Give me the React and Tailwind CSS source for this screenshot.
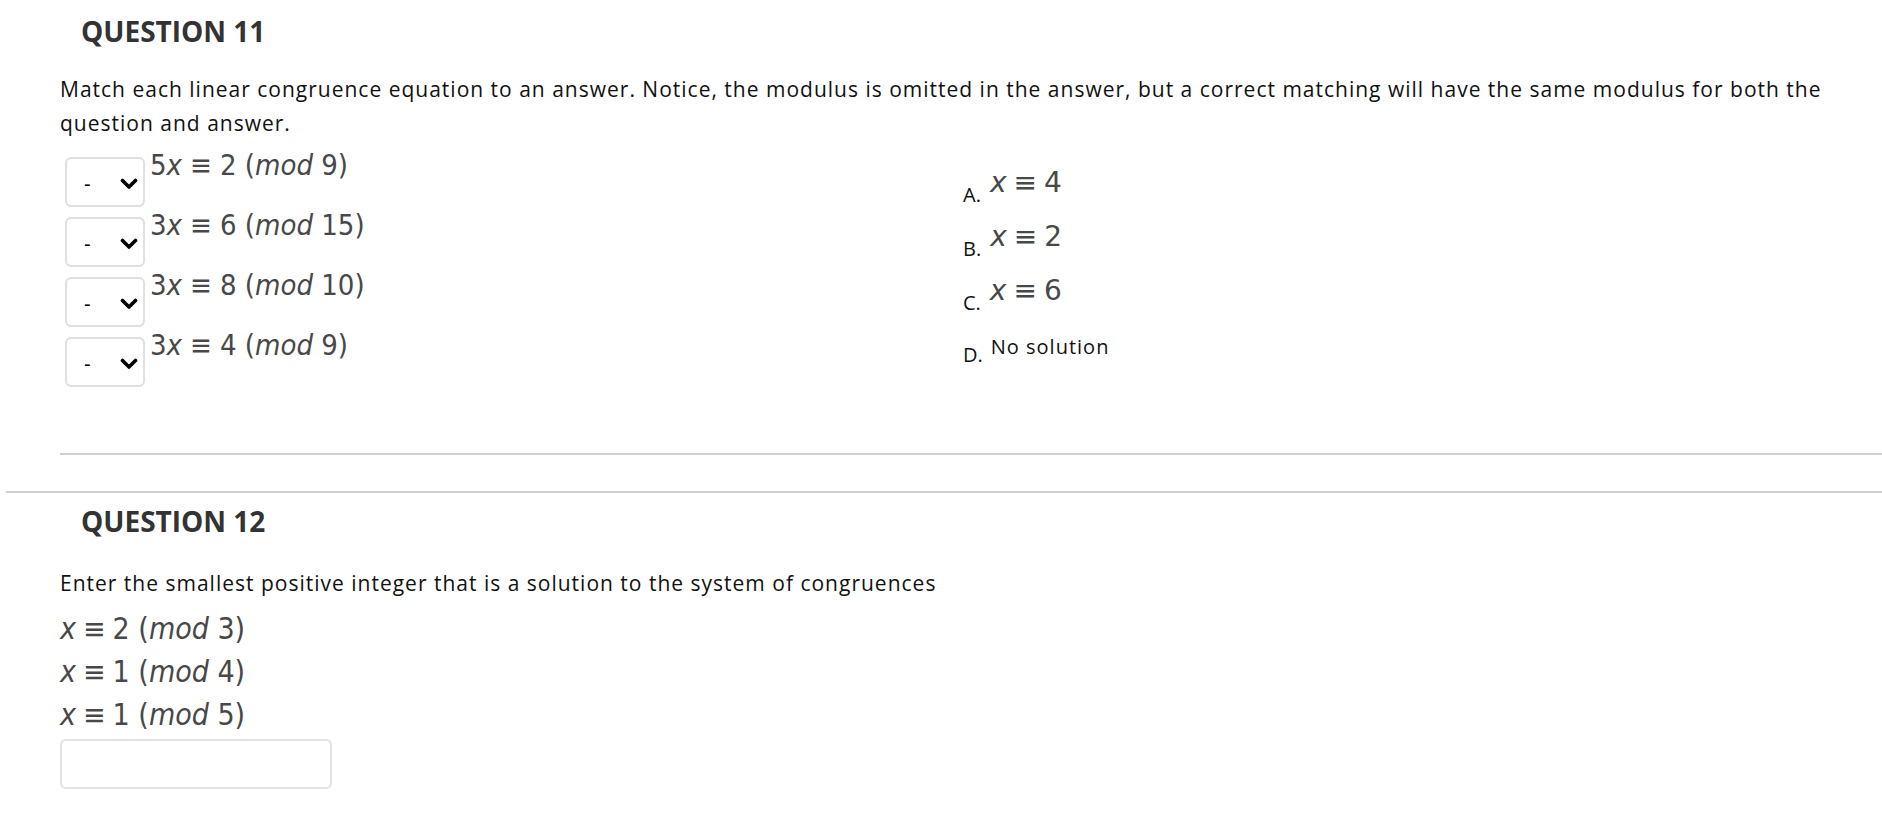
const MATCH_ROWS = [
  { coef: '5', rhs: '2', mod: '9' },
  { coef: '3', rhs: '6', mod: '15' },
  { coef: '3', rhs: '8', mod: '10' },
  { coef: '3', rhs: '4', mod: '9' },
];

const ANSWERS = [
  { letter: 'A.', rhs: '4' },
  { letter: 'B.', rhs: '2' },
  { letter: 'C.', rhs: '6' },
];

const SYSTEM = [
  { rhs: '2', mod: '3' },
  { rhs: '1', mod: '4' },
  { rhs: '1', mod: '5' },
];

function Congruence({ coef, rhs, mod, relGap = 'mx-[7px]' }) {
  return (
    <span className="text-[#484848] whitespace-nowrap">
      {coef}
      <i>x</i>
      <span className={relGap}>≡</span>
      {rhs} (<i>mod</i> {mod})
    </span>
  );
}

function Dropdown() {
  return (
    <div className="relative w-[80px] h-[50px] shrink-0 rounded-[6px] border-2 border-[#e0e0e0] bg-white">
      <select className="w-full h-full appearance-none bg-transparent pl-[17px] pt-[4px] text-[20px] text-black font-['Liberation_Sans',sans-serif] outline-none">
        <option>-</option>
        <option>A</option>
        <option>B</option>
        <option>C</option>
        <option>D</option>
      </select>
      <svg
        className="absolute left-[53px] top-[19px] pointer-events-none"
        width="18"
        height="12"
        viewBox="0 0 18 12"
      >
        <path d="M2.5 2.5 L9 9 L15.5 2.5" fill="none" stroke="#000" strokeWidth="3.6" strokeLinecap="round" strokeLinejoin="round" />
      </svg>
    </div>
  );
}

export default function App() {
  return (
    <div className="min-h-screen bg-white text-[#111] font-['Open_Sans',sans-serif] tracking-[1px]">
      {/* Question 11 */}
      <section className="pl-[60px] pt-[14px]">
        <h2 className="pl-[21px] font-bold text-[28px] leading-[35px] tracking-normal text-[#333]">
          QUESTION 11
        </h2>
        <p className="mt-[23px] text-[21px] leading-[34px] pr-[40px]">
          Match each linear congruence equation to an answer. Notice, the modulus is omitted in the answer, but a correct matching will have the same modulus for both the question and answer.
        </p>

        <div className="mt-[17px] flex items-start">
          <div className="w-[903px] flex flex-col gap-[10px]">
            {MATCH_ROWS.map((row, i) => (
              <div key={i} className="flex items-start pl-[5px]">
                <Dropdown />
                <div className="ml-[5px] -mt-[6px] font-['DejaVu_Sans_Condensed','DejaVu_Sans',sans-serif] tracking-normal text-[29px] leading-[29px]">
                  <Congruence {...row} relGap="mx-[8px]" />
                </div>
              </div>
            ))}
          </div>

          <div className="pt-[14px] flex flex-col">
            {ANSWERS.map((a) => (
              <div key={a.letter} className="h-[54px] text-[20px] leading-[24px] tracking-normal whitespace-nowrap">
                {a.letter}
                <span className="ml-[9px] align-[10px] text-[28px] leading-[24px] font-['DejaVu_Sans',sans-serif] text-[#484848]">
                  <i>x</i>
                  <span className="mx-[7px]">≡</span>
                  {a.rhs}
                </span>
              </div>
            ))}
            <div className="mt-[2px] h-[40px] text-[20px] leading-[24px] tracking-normal whitespace-nowrap">
              D.
              <span className="ml-[8px] align-[8px] tracking-[1px]">No solution</span>
            </div>
          </div>
        </div>

        <hr className="mt-[66px] border-0 border-t-2 border-[#cfcfcf]" />
      </section>

      <hr className="ml-[6px] mt-[36px] border-0 border-t-2 border-[#cfcfcf]" />

      {/* Question 12 */}
      <section className="pl-[60px]">
        <h2 className="mt-[11px] pl-[21px] font-bold text-[28px] leading-[35px] tracking-normal text-[#333]">
          QUESTION 12
        </h2>
        <p className="mt-[27px] text-[21px] leading-[34px]">
          Enter the smallest positive integer that is a solution to the system of congruences
        </p>
        <div className="mt-[7px] font-['DejaVu_Sans_Condensed','DejaVu_Sans',sans-serif] tracking-normal text-[30px] leading-[43px]">
          {SYSTEM.map((s, i) => (
            <div key={i}>
              <Congruence coef="" rhs={s.rhs} mod={s.mod} />
            </div>
          ))}
        </div>
        <input
          type="text"
          className="mt-[3px] block w-[272px] h-[50px] rounded-[6px] border-2 border-[#e2e2e2] bg-white px-3 text-[20px] outline-none"
        />
      </section>
    </div>
  );
}
